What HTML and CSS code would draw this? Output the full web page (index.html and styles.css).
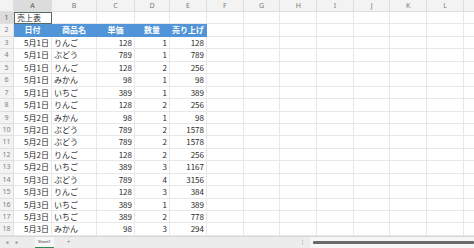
FILE: index.html
```html
<!DOCTYPE html>
<html lang="ja">
<head>
    <meta charset="UTF-8">
    <title>売上表</title>
    <link rel="stylesheet" href="styles.css">
</head>
<body>
    <div class="sheet">
        <div class="row head">
            <div></div>
            <div class="sel">A</div><div>B</div><div>C</div><div>D</div><div>E</div>
            <div class="cols"><span>F</span><span>G</span><span>H</span><span>I</span><span>J</span><span>K</span><span>L</span><span></span></div>
        </div>
        <div class="row">
            <div class="rh sel">1</div>
            <div class="active">売上表</div><div></div><div></div><div></div><div></div><div class="rest"></div>
        </div>
        <div class="row">
            <div class="rh">2</div>
            <div class="th">日付</div><div class="th">商品名</div><div class="th">単価</div><div class="th">数量</div><div class="th">売り上げ</div><div class="rest"></div>
        </div>
        <div class="row"><div class="rh">3</div><div class="num">5月1日</div><div>りんご</div><div class="num">128</div><div class="num">1</div><div class="num">128</div><div class="rest"></div></div>
        <div class="row"><div class="rh">4</div><div class="num">5月1日</div><div>ぶどう</div><div class="num">789</div><div class="num">1</div><div class="num">789</div><div class="rest"></div></div>
        <div class="row"><div class="rh">5</div><div class="num">5月1日</div><div>りんご</div><div class="num">128</div><div class="num">2</div><div class="num">256</div><div class="rest"></div></div>
        <div class="row"><div class="rh">6</div><div class="num">5月1日</div><div>みかん</div><div class="num">98</div><div class="num">1</div><div class="num">98</div><div class="rest"></div></div>
        <div class="row"><div class="rh">7</div><div class="num">5月1日</div><div>いちご</div><div class="num">389</div><div class="num">1</div><div class="num">389</div><div class="rest"></div></div>
        <div class="row"><div class="rh">8</div><div class="num">5月1日</div><div>りんご</div><div class="num">128</div><div class="num">2</div><div class="num">256</div><div class="rest"></div></div>
        <div class="row"><div class="rh">9</div><div class="num">5月2日</div><div>みかん</div><div class="num">98</div><div class="num">1</div><div class="num">98</div><div class="rest"></div></div>
        <div class="row"><div class="rh">10</div><div class="num">5月2日</div><div>ぶどう</div><div class="num">789</div><div class="num">2</div><div class="num">1578</div><div class="rest"></div></div>
        <div class="row"><div class="rh">11</div><div class="num">5月2日</div><div>ぶどう</div><div class="num">789</div><div class="num">2</div><div class="num">1578</div><div class="rest"></div></div>
        <div class="row"><div class="rh">12</div><div class="num">5月2日</div><div>りんご</div><div class="num">128</div><div class="num">2</div><div class="num">256</div><div class="rest"></div></div>
        <div class="row"><div class="rh">13</div><div class="num">5月2日</div><div>いちご</div><div class="num">389</div><div class="num">3</div><div class="num">1167</div><div class="rest"></div></div>
        <div class="row"><div class="rh">14</div><div class="num">5月3日</div><div>ぶどう</div><div class="num">789</div><div class="num">4</div><div class="num">3156</div><div class="rest"></div></div>
        <div class="row"><div class="rh">15</div><div class="num">5月3日</div><div>りんご</div><div class="num">128</div><div class="num">3</div><div class="num">384</div><div class="rest"></div></div>
        <div class="row"><div class="rh">16</div><div class="num">5月3日</div><div>いちご</div><div class="num">389</div><div class="num">1</div><div class="num">389</div><div class="rest"></div></div>
        <div class="row"><div class="rh">17</div><div class="num">5月3日</div><div>いちご</div><div class="num">389</div><div class="num">2</div><div class="num">778</div><div class="rest"></div></div>
        <div class="row"><div class="rh">18</div><div class="num">5月3日</div><div>みかん</div><div class="num">98</div><div class="num">3</div><div class="num">294</div><div class="rest"></div></div>

        <div class="tabbar">
            <span class="nav">&#9664;</span>
            <span class="nav">&#9654;</span>
            <span class="tab">Sheet1</span>
            <span class="add">+</span>
            <span class="spacer"></span>
            <span class="dots">&#8942;</span>
            <div class="scroll"><div class="thumb"></div></div>
        </div>
    </div>
</body>
</html>
```

FILE: styles.css
```css
body {
    margin: 0;
    width: 474px;
    height: 248px;
    overflow: hidden;
    background: #fff;
    color: #2a2a2a;
    font-family: "Noto Sans CJK JP", "Noto Sans", sans-serif;
    font-size: 8px;
}
.sheet {
    display: flex;
    flex-direction: column;
    height: 248px;
}
.row {
    flex: none;
    display: grid;
    grid-template-columns: 14px 38px 45px 38px 35px 37px 1fr;
    height: 12.45px;
}
.row > div {
    box-sizing: border-box;
    border-right: 1px solid #e8e8e8;
    border-bottom: 1px solid #e8e8e8;
    padding: 0 2px;
    line-height: 11.45px;
    white-space: nowrap;
    overflow: hidden;
}
.num {
    text-align: right;
}
.head {
    height: 12px;
    background: #f3f3f3;
    color: #7a7a7a;
    font-family: "Noto Sans", sans-serif;
    font-size: 7px;
}
.head > div {
    text-align: center;
    line-height: 11px;
    border-color: #dedede;
}
.head .sel {
    background: #dcdcdc;
    color: #555;
}
.cols {
    display: flex;
    padding: 0 !important;
    border-right: none !important;
}
.cols span {
    flex: none;
    width: 36.7px;
    box-sizing: border-box;
    border-right: 1px solid #dedede;
}
.row > .rh {
    background: #f3f3f3;
    color: #808080;
    text-align: center;
    padding: 0;
    font-family: "Noto Sans", sans-serif;
    font-size: 7px;
    border-color: #dedede;
}
.row > .rh.sel {
    background: #dcdcdc;
    color: #555;
}
.row > .active {
    padding-left: 3px;
    outline: 1px solid #55695e;
    outline-offset: -1px;
}
.row > .th {
    background: #5195d8;
    border-color: #5195d8;
    color: #fff;
    font-weight: bold;
    text-align: center;
}
.row > .rest {
    border-right: none;
    padding: 0;
    background: repeating-linear-gradient(to right, transparent 0 35.7px, #e8e8e8 35.7px 36.7px);
}
.tabbar {
    flex: 1;
    display: flex;
    align-items: center;
    background: #ececec;
    border-top: 1px solid #d8d8d8;
    color: #999;
    font-family: "Noto Sans", sans-serif;
    font-size: 4px;
}
.nav {
    width: 10px;
    text-align: center;
}
.nav:first-child {
    margin-left: 2px;
}
.tab {
    margin-left: 13px;
    padding: 0 3px;
    height: 100%;
    display: flex;
    align-items: center;
    background: #f7f7f7;
    color: #333;
    border-bottom: 1px solid #2e8b57;
    box-sizing: border-box;
}
.add {
    margin-left: 13px;
    font-size: 6px;
    color: #888;
}
.spacer {
    flex: 1;
}
.dots {
    font-size: 5px;
    color: #888;
    margin-right: 5px;
}
.scroll {
    width: 164px;
    height: 100%;
    display: flex;
    align-items: center;
    background: #f6f6f6;
}
.thumb {
    flex: 1;
    height: 3px;
    margin-left: 3px;
    background: #6a6a6a;
    border-radius: 1px;
}
```
